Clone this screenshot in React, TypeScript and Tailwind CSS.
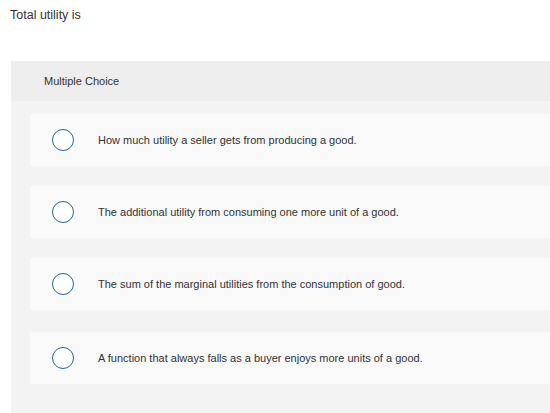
const options = [
  'How much utility a seller gets from producing a good.',
  'The additional utility from consuming one more unit of a good.',
  'The sum of the marginal utilities from the consumption of good.',
  'A function that always falls as a buyer enjoys more units of a good.',
];

export default function App() {
  return (
    <div className="h-[413px] w-[550px] overflow-hidden bg-white font-['Liberation_Sans',Arial,sans-serif] text-[#333]">
      <div className="h-[61px] pl-[10px] pt-[6px] text-[12.5px]">Total utility is</div>

      <div className="ml-[11px] w-[600px] bg-[#f3f3f3] pb-[40px]">
        <div className="flex h-[40px] items-center bg-[#eeeeee] pl-[33px] text-[11px]">
          Multiple Choice
        </div>

        <div className="flex flex-col gap-[20px] pl-[19px] pt-[13px]">
          {options.map((text, i) => (
            <div
              key={text}
              className={`flex h-[52px] items-center bg-[#f9f9f9] ${i === 3 ? 'mt-[2px]' : ''}`}
            >
              <span className="ml-[22px] h-[22px] w-[22px] shrink-0 rounded-full border-[1.5px] border-[#1f67a8] bg-white" />
              <span className="ml-[24px] text-[11px]">{text}</span>
            </div>
          ))}
        </div>
      </div>
    </div>
  );
}
